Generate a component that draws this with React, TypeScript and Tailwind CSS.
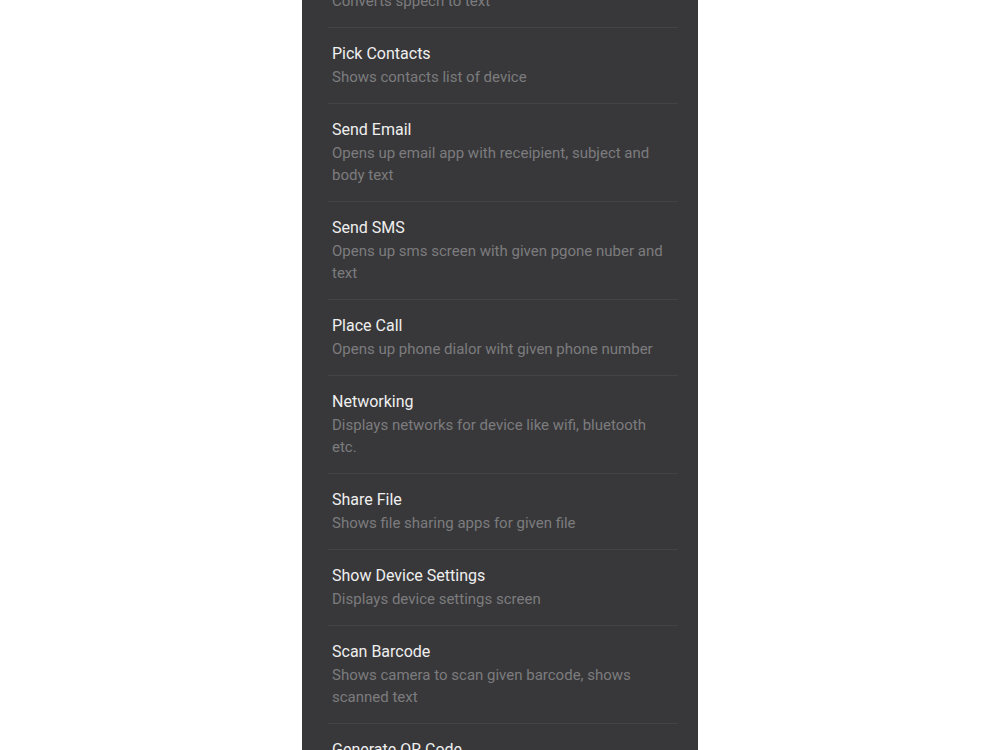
const items = [
  { title: 'Pick Contacts', sub: 'Shows contacts list of device' },
  { title: 'Send Email', sub: 'Opens up email app with receipient, subject and body text' },
  { title: 'Send SMS', sub: 'Opens up sms screen with given pgone nuber and text' },
  { title: 'Place Call', sub: 'Opens up phone dialor wiht given phone number' },
  { title: 'Networking', sub: 'Displays networks for device like wifi, bluetooth etc.' },
  { title: 'Share File', sub: 'Shows file sharing apps for given file' },
  { title: 'Show Device Settings', sub: 'Displays device settings screen' },
  { title: 'Scan Barcode', sub: 'Shows camera to scan given barcode, shows scanned text' },
  { title: 'Generate QR Code', sub: 'Generates QR code for given text' },
];

export default function App() {
  return (
    <div className="w-[1000px] h-[750px] bg-white flex justify-center overflow-hidden">
      <div
        className="w-[396px] h-[750px] bg-[#38383a] overflow-hidden pl-[26px] pr-[20px]"
        style={{ fontFamily: 'Roboto, "Liberation Sans", sans-serif' }}
      >
        {/* previous row, cut off at top */}
        <div className="mt-[-48px] pt-[15px] pb-[15px] pl-[4px] pr-[8px] border-b border-[#434345]">
          <div className="text-[16px] leading-[22px] text-[#efefef]">Speech To Text</div>
          <div className="text-[15px] leading-[22px] text-[#7c7c7e] mt-[1px]">Converts sppech to text</div>
        </div>
        {items.map((it) => (
          <div key={it.title} className="pt-[15px] pb-[15px] pl-[4px] pr-[8px] border-b border-[#434345]">
            <div className="text-[16px] leading-[22px] text-[#efefef]">{it.title}</div>
            <div className="text-[15px] leading-[22px] text-[#7c7c7e] mt-[1px]">{it.sub}</div>
          </div>
        ))}
      </div>
    </div>
  );
}
